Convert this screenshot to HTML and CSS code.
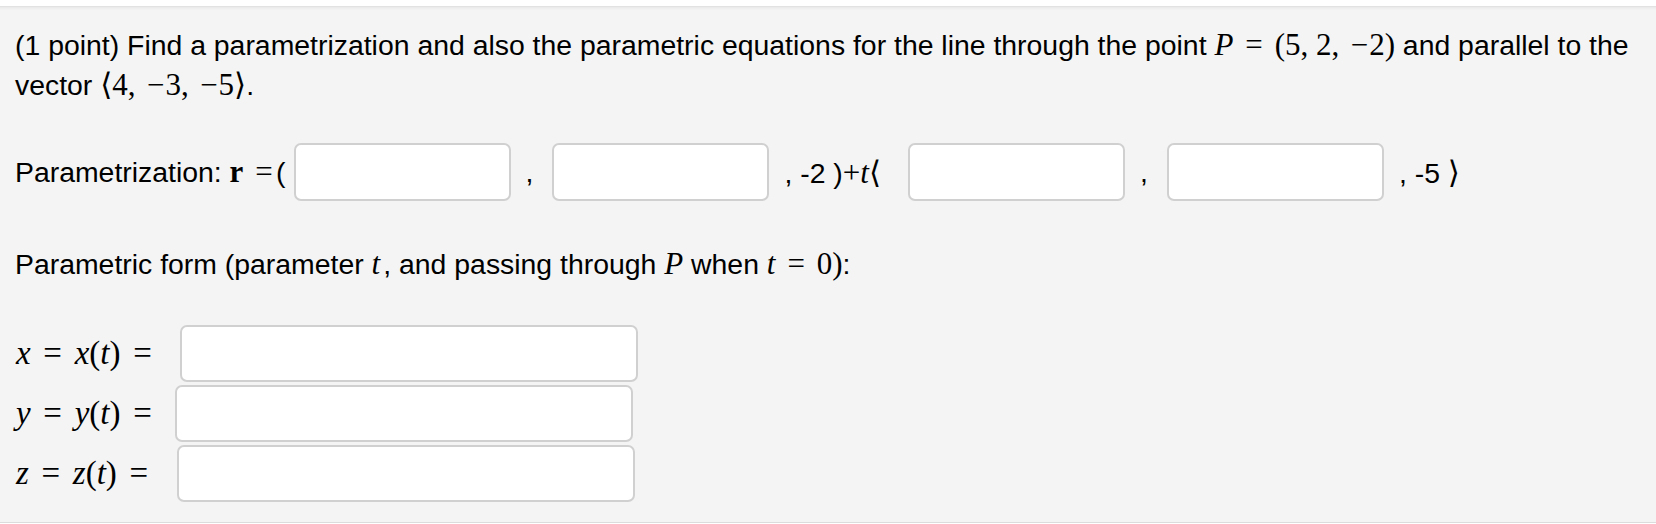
FILE: index.html
```html
<!DOCTYPE html>
<html>
<head>
<meta charset="utf-8">
<link rel="stylesheet" href="styles.css">
</head>
<body>
<div class="problem">
  <p class="q">(1 point) Find a parametrization and also the parametric equations for the line through the point <span class="m"><i>P</i><span class="rel">=</span>(5, 2, <span class="mn">−</span>2)</span> and parallel to the vector <span class="m">⟨4, <span class="mn">−</span>3, <span class="mn">−</span>5⟩</span>.</p>

  <div class="prow">
    <span class="lbl">Parametrization: <span class="m"><b>r</b><span class="rel rel-l">=</span></span>(</span>
    <input class="box" type="text">
    <span class="sep">,</span>
    <input class="box" type="text">
    <span class="sep sep-wide">, -2 )<span class="m">+<i>t</i>⟨</span></span>
    <input class="box" type="text">
    <span class="sep">,</span>
    <input class="box" type="text">
    <span class="sep">, -5 <span class="m">⟩</span></span>
  </div>

  <p class="pf">Parametric form (parameter <span class="m"><i class="ic">t</i></span>, and passing through <span class="m"><i>P</i></span> when <span class="m"><i>t</i><span class="rel">=</span>0)</span>:</p>

  <div class="eqs">
    <div class="eq eq-x"><span class="m elbl"><i>x</i><span class="rel">=</span><i>x</i>(<i>t</i>)<span class="rel rel-l">=</span></span><input class="wide" type="text"></div>
    <div class="eq eq-y"><span class="m elbl"><i>y</i><span class="rel">=</span><i>y</i>(<i>t</i>)<span class="rel rel-l">=</span></span><input class="wide" type="text"></div>
    <div class="eq eq-z"><span class="m elbl"><i>z</i><span class="rel">=</span><i>z</i>(<i>t</i>)<span class="rel rel-l">=</span></span><input class="wide" type="text"></div>
  </div>
</div>
</body>
</html>
```

FILE: styles.css
```css
html, body {
  margin: 0;
  padding: 0;
  background: #ffffff;
}
body {
  font-family: "Liberation Sans", Arial, sans-serif;
  font-size: 28.4px;
  color: #000;
}
.problem {
  margin-top: 6px;
  border-top: 1px solid #e2e2e2;
  border-bottom: 1px solid #dcdcdc;
  background: #f4f4f4;
  box-shadow: inset 0 3px 3px -2px rgba(0,0,0,0.06);
  padding: 18px 0 0 15px;
  box-sizing: border-box;
  height: 517px;
}
.q {
  margin: 0;
  line-height: 40px;
}
.m {
  font-family: "Liberation Serif", "DejaVu Serif", serif;
  font-size: 31px;
}
.m i { font-style: italic; }
.m b { font-weight: bold; }
.rel {
  display: inline-block;
  padding: 0 0.107em;
  margin: 0 0.278em;
}
.rel-l { margin-right: 0; }
.mn {
  display: inline-block;
  padding: 0 0.03em 0 0.12em;
}
.ic { margin-right: 0.1em; }
.prow {
  margin-top: 38px;
  display: flex;
  align-items: center;
  height: 58px;
  white-space: pre;
}
.box, .wide {
  box-sizing: border-box;
  height: 58px;
  border: 2px solid #d0d0d0;
  border-radius: 7px;
  background: #fff;
  padding: 0;
  margin: 0;
  font-size: 24px;
  outline: none;
}
.box { width: 217px; }
.lbl { margin-right: 8px; }
.sep { margin: 0 19px 0 15px; }
.sep-wide { margin-right: 27px; }
.pf {
  margin: 43px 0 0;
  line-height: 40px;
}
.eqs {
  margin-top: 41px;
  display: flex;
  flex-direction: column;
  gap: 3px;
}
.eq {
  display: flex;
  align-items: center;
  height: 57px;
}
.elbl {
  font-size: 33px;
  margin-left: 1px;
  margin-right: 25px;
}
.eq-y .elbl { margin-right: 20px; }
.wide {
  width: 458px;
  height: 57px;
}
```
